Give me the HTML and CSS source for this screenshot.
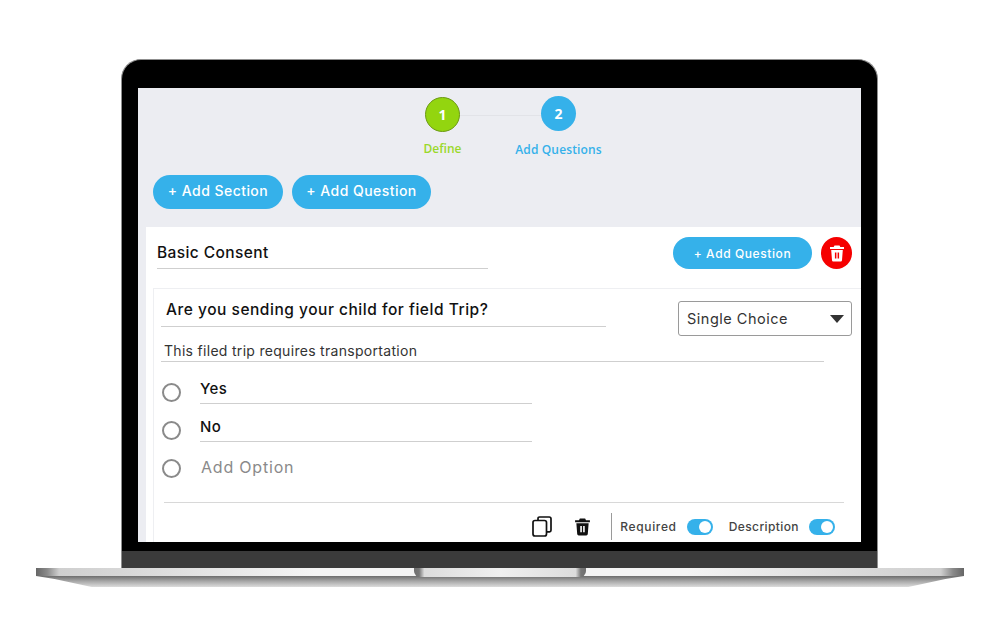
FILE: index.html
```html
<!DOCTYPE html>
<html lang="en">
<head>
    <meta charset="UTF-8">
    <meta name="viewport" content="width=device-width, initial-scale=1.0">
    <title>Consent Form Builder</title>
    <link rel="stylesheet" href="styles.css">
</head>
<body>
    <div class="laptop">
        <div class="lid">
            <div class="screen">
                <div class="stepper">
                    <div class="step step-done">
                        <div class="step-circle">1</div>
                        <div class="step-label">Define</div>
                    </div>
                    <div class="step step-active">
                        <div class="step-circle">2</div>
                        <div class="step-label">Add Questions</div>
                    </div>
                </div>

                <div class="top-actions">
                    <button class="pill pill-large add-section">+ Add Section</button>
                    <button class="pill pill-large">+ Add Question</button>
                </div>

                <div class="section-card">
                    <div class="section-head">
                        <div class="section-title">Basic Consent</div>
                        <button class="pill pill-small">+ Add Question</button>
                        <button class="delete-round" aria-label="Delete section">
                            <svg width="16" height="17" viewBox="0 0 16 17">
                                <path fill="#fff" d="M5.5 0.5h5l.8 1.600H15v2H1v-2h3.700zM2.200 5h11.600l-.8 10.200c-.1.8-.7 1.300-1.400 1.300H4.400c-.7 0-1.300-.5-1.400-1.300zM5.900 7.500v6h1.500v-6zM8.600 7.500v6h1.500v-6z" fill-rule="evenodd"/>
                            </svg>
                        </button>
                    </div>

                    <div class="question-card">
                        <div class="question-head">
                            <div class="question-title">Are you sending your child for field Trip?</div>
                            <div class="type-select">
                                <span>Single Choice</span>
                                <span class="select-arrow"></span>
                            </div>
                        </div>
                        <div class="question-desc">This filed trip requires transportation</div>

                        <div class="option">
                            <span class="radio"></span>
                            <span class="option-text">Yes</span>
                        </div>
                        <div class="option">
                            <span class="radio"></span>
                            <span class="option-text">No</span>
                        </div>
                        <div class="option option-add">
                            <span class="radio"></span>
                            <span class="option-text">Add Option</span>
                        </div>

                        <div class="question-foot">
                            <svg class="copy-icon" width="20" height="21" viewBox="0 0 20 21">
                                <path fill="none" stroke="#111" stroke-width="1.700" stroke-linejoin="round" d="M6 4V2.500C6 1.600 6.600 1 7.500 1h9.700C18.200 1 19 1.700 19 2.700v11.600c0 .9-.7 1.500-1.500 1.500H15"/>
                                <rect x="1" y="4.500" width="13.500" height="15.500" rx="2" fill="none" stroke="#111" stroke-width="1.700"/>
                            </svg>
                            <svg class="trash-icon" width="17" height="18" viewBox="0 0 16 17">
                                <path fill="#111" d="M5.500 0.500h5l.8 1.600H15v2H1v-2h3.700zM2.200 5h11.600l-.8 10.200c-.1.8-.7 1.300-1.400 1.300H4.400c-.7 0-1.300-.5-1.400-1.300zM5.900 7.500v6h1.500v-6zM8.600 7.500v6h1.500v-6z" fill-rule="evenodd"/>
                            </svg>
                            <span class="foot-divider"></span>
                            <span class="foot-label foot-label-req">Required</span>
                            <span class="toggle"></span>
                            <span class="foot-label foot-label-desc">Description</span>
                            <span class="toggle"></span>
                        </div>
                    </div>
                </div>
            </div>
            <div class="chin"></div>
        </div>
        <div class="base">
            <div class="base-top"></div>
            <div class="base-bottom"></div>
            <div class="notch"></div>
        </div>
    </div>
</body>
</html>
```

FILE: styles.css
```css
* {
    margin: 0;
    padding: 0;
    box-sizing: border-box;
}

body {
    font-family: 'Inter', 'Liberation Sans', sans-serif;
    background: white;
    color: #111;
    height: 641px;
    overflow: hidden;
}

.laptop {
    width: 928px;
    margin: 59px 0 0 36px;
    display: flex;
    flex-direction: column;
    align-items: center;
}

/* lid and bezel */
.lid {
    width: 757px;
    height: 509px;
    margin-left: -1px;
    background: black;
    border-radius: 20px 20px 0 0;
    border: 1px solid #8f8f8f;
    border-bottom: none;
    padding-top: 28px;
    padding-left: 16px;
    display: flex;
    flex-direction: column;
}

.screen {
    width: 723px;
    height: 454px;
    background: #ecedf2;
    padding-top: 9px;
    overflow: hidden;
    flex-shrink: 0;
}

.chin {
    margin: 9px 0 0 -16px;
    width: 755px;
    height: 17px;
    background: #3b3b3b;
}

/* base of the laptop */
.base {
    width: 928px;
    height: 19px;
    position: relative;
}

.base-top {
    height: 8px;
    background: linear-gradient(90deg, #666 0, #8a8a8a 1.200%, #cfcfcf 2.500%, #d8d8d8 10%, #f4f4f4 30%, #f4f4f4 70%, #d8d8d8 90%, #cfcfcf 97.500%, #8a8a8a 98.800%, #666 100%);
}

.base-bottom {
    height: 11px;
    background: linear-gradient(180deg, #6d6d6d 0%, #a5a5a5 45%, #dcdcdc 100%);
    clip-path: polygon(0 0, 100% 0, 98% 28%, 94% 100%, 6% 100%, 2% 28%);
}

.notch {
    position: absolute;
    left: 378px;
    top: 0;
    width: 172px;
    height: 9px;
    background: linear-gradient(90deg, #6f6f6f 0, #777 3%, #dcdcdc 6%, #f0f0f0 50%, #dcdcdc 94%, #777 97%, #6f6f6f 100%);
    border-radius: 0 0 6px 6px;
}

/* steps */
.stepper {
    display: flex;
    justify-content: center;
    height: 78px;
    padding-left: 2px;
}

.step {
    width: 116px;
    display: flex;
    flex-direction: column;
    align-items: center;
    position: relative;
}

.step-circle {
    width: 35px;
    height: 35px;
    border-radius: 50%;
    display: flex;
    align-items: center;
    justify-content: center;
    color: white;
    font-family: 'Open Sans', sans-serif;
    font-size: 14px;
    font-weight: 700;
}

.step-label {
    font-family: 'Open Sans', sans-serif;
    font-size: 12px;
    font-weight: 600;
    line-height: 16px;
    margin-top: 9px;
    white-space: nowrap;
}

.step-done .step-circle {
    background: #93d50f;
    border: 1px solid #6c9a14;
}

.step-done .step-label {
    color: #9ad82a;
}

.step-done::after {
    content: "";
    position: absolute;
    left: 75px;
    top: 18px;
    width: 83px;
    height: 1px;
    background: #e2e3e8;
}

.step-active .step-circle {
    background: #35b1ea;
    margin-top: -1px;
}

.step-active .step-label {
    color: #35b1ea;
    margin-top: 11px;
    letter-spacing: 0.15px;
}

/* buttons */
.pill {
    background: #35b1ea;
    color: white;
    border: none;
    border-radius: 17px;
    font-family: inherit;
    font-weight: 500;
    white-space: nowrap;
}

.pill-large {
    height: 34px;
    width: 139px;
    padding-bottom: 3px;
    font-size: 14px;
    letter-spacing: 0.45px;
}

.pill-large.add-section {
    width: 130px;
}

.pill-small {
    height: 32px;
    width: 139px;
    font-size: 12px;
    letter-spacing: 0.6px;
    margin-left: auto;
}

.top-actions {
    display: flex;
    gap: 9px;
    padding-left: 15px;
    height: 52px;
}

.delete-round {
    width: 31px;
    height: 32px;
    margin-left: 9px;
    border: none;
    border-radius: 50%;
    background: #f50000;
    display: flex;
    align-items: center;
    justify-content: center;
}

/* section card */
.section-card {
    background: white;
    margin-left: 8px;
    padding: 10px 0 0 7px;
    height: 315px;
}

.section-head {
    display: flex;
    align-items: flex-start;
    padding-right: 9px;
    height: 51px;
}

.section-title {
    width: 331px;
    margin-left: 4px;
    height: 32px;
    border-bottom: 1px solid #cfcfcf;
    font-size: 15.500px;
    font-weight: 500;
    letter-spacing: 0.4px;
    line-height: 31px;
}

/* question card */
.question-card {
    border-top: 1px solid #eeeff2;
    border-left: 1px solid #eeeff2;
    padding: 12px 0 0 7px;
    height: 254px;
}

.question-head {
    display: flex;
    align-items: flex-start;
    padding-right: 9px;
}

.question-title {
    width: 445px;
    height: 26px;
    border-bottom: 1px solid #cfcfcf;
    padding-left: 5px;
    font-size: 15.500px;
    font-weight: 500;
    letter-spacing: 0.52px;
    line-height: 17px;
}

.type-select {
    width: 174px;
    height: 35px;
    margin-left: auto;
    border: 1px solid #9a9a9a;
    border-radius: 3px;
    display: flex;
    align-items: center;
    justify-content: space-between;
    padding: 0 7px 0 8px;
    font-size: 14.500px;
    letter-spacing: 0.5px;
    color: #333;
}

.select-arrow {
    width: 0;
    height: 0;
    border-left: 7px solid transparent;
    border-right: 7px solid transparent;
    border-top: 8px solid #333;
}

.question-desc {
    width: 663px;
    height: 27px;
    margin-top: -1px;
    border-bottom: 1px solid #cfcfcf;
    padding: 3px 0 0 3px;
    font-size: 14px;
    letter-spacing: 0.3px;
    line-height: 25px;
    color: #333;
}

.option {
    display: flex;
    align-items: flex-start;
    height: 38px;
    padding-top: 21px;
}

.radio {
    width: 19px;
    height: 19px;
    margin-left: 1px;
    border: 2px solid #8a8a8a;
    border-radius: 50%;
    flex-shrink: 0;
}

.option-text {
    width: 332px;
    margin: -4px 0 0 19px;
    height: 25px;
    font-size: 15px;
    font-weight: 500;
    letter-spacing: 0.4px;
    border-bottom: 1px solid #cfcfcf;
}

.option-add .option-text {
    border-bottom: none;
    color: #8a8a8a;
    font-size: 16px;
    font-weight: 400;
    letter-spacing: 0.8px;
    margin: -2px 0 0 20px;
}

/* bottom toolbar */
.question-foot {
    width: 680px;
    margin: 26px 0 0 3px;
    border-top: 1px solid #d8d8d8;
    height: 38px;
    display: flex;
    align-items: center;
    justify-content: flex-end;
    padding: 10px 9px 0 0;
}

.copy-icon {
    margin-right: 22px;
}

.trash-icon {
    margin-right: 20px;
}

.foot-divider {
    width: 1px;
    height: 27px;
    background: #9a9a9a;
    margin-right: 8px;
}

.foot-label {
    font-size: 12px;
    font-weight: 500;
    letter-spacing: 0.4px;
    color: #444;
}

.foot-label-req {
    letter-spacing: 0.65px;
}

.foot-label-desc {
    margin-left: 16px;
}

.toggle {
    width: 26px;
    height: 16px;
    margin-left: 10px;
    border-radius: 8px;
    background: #35b1ea;
    position: relative;
}

.toggle::after {
    content: "";
    position: absolute;
    right: 2px;
    top: 2px;
    width: 12px;
    height: 12px;
    border-radius: 50%;
    background: white;
}
```
